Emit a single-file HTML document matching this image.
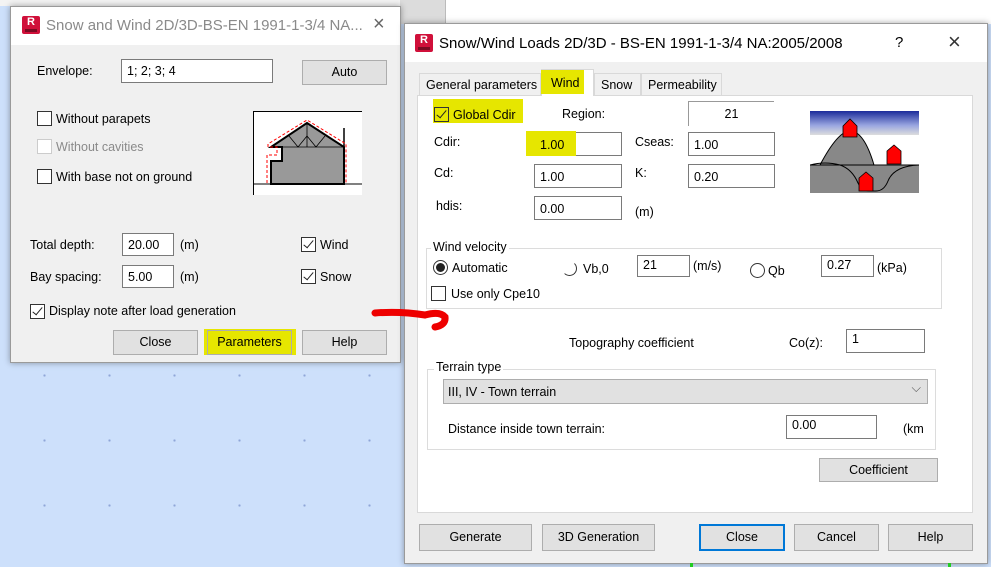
<!DOCTYPE html>
<html><head><meta charset="utf-8"><style>
*{box-sizing:border-box;margin:0;padding:0}
body{width:991px;height:567px;position:relative;overflow:hidden;font-family:"Liberation Sans",sans-serif;font-size:12.5px;color:#000;
background-color:#cde0fb;background-image:radial-gradient(circle,#8fa6d8 1px,transparent 1.3px);background-size:65px 65px;background-position:12px 18px}
.a{position:absolute;white-space:nowrap}
.dlg{position:absolute;background:#f0f0f0;border:1px solid #9a9a9a;box-shadow:0 0 6px rgba(0,0,0,.35)}
.tb{position:absolute;left:0;right:0;top:0;height:38px;background:#fff}
.inp{position:absolute;background:#fff;border:1px solid #7a7a7a;padding:4px 0 0 5px;height:24px}
.btn{position:absolute;background:#e1e1e1;border:1px solid #adadad;text-align:center;line-height:23px}
.cb{position:absolute;width:15px;height:15px;border:1px solid #333;background:#fff}
.cb.k::after{content:"";position:absolute;left:4px;top:0px;width:4px;height:9px;border:solid #222;border-width:0 1.5px 1.5px 0;transform:rotate(40deg)}
.hl{position:absolute;background:#e6e600}
.grp{position:absolute;border:1px solid #dcdcdc}
.lg{position:absolute;background:#fff;padding:0 2px}
.logo{position:absolute;width:18px;height:18px;background:#d0103a;border-radius:2px;color:#fff;font-weight:bold;font-size:11px;text-align:center;line-height:13px}
.logo::after{content:"";position:absolute;left:3px;bottom:2px;width:12px;height:3px;background:#7a0a22}
.rad{position:absolute;width:15px;height:15px;border-radius:50%;border:1px solid #333;background:#fff}
</style></head><body>
<div class="a" style="left:0;top:0;width:991px;height:6px;background:#f3f3f3"></div>
<div class="a" style="left:400px;top:0;width:46px;height:24px;background:#dcdcdc;border-right:1px solid #bbb"></div>
<div class="a" style="left:446px;top:0;width:545px;height:24px;background:#fff"></div>

<!-- Left dialog -->
<div class="dlg" style="left:10px;top:6px;width:391px;height:357px">
 <div class="tb"></div>
 <div class="logo" style="left:11px;top:9px">R</div>
 <div class="a" style="left:35px;top:10px;font-size:15px;color:#8a8a8a">Snow and Wind 2D/3D-BS-EN 1991-1-3/4 NA...</div>
 <div class="a" style="left:362px;top:6px;font-size:20px;color:#666">×</div>
 <div class="a" style="left:26px;top:57px">Envelope:</div>
 <div class="inp" style="left:110px;top:52px;width:152px;height:24px">1; 2; 3; 4</div>
 <div class="btn" style="left:291px;top:53px;width:85px;height:25px">Auto</div>
 <div class="cb" style="left:26px;top:104px"></div><div class="a" style="left:45px;top:105px">Without parapets</div>
 <div class="cb" style="left:26px;top:132px;border-color:#ccc"></div><div class="a" style="left:45px;top:133px;color:#8a8a8a">Without cavities</div>
 <div class="cb" style="left:26px;top:162px"></div><div class="a" style="left:45px;top:163px">With base not on ground</div>
 <svg class="a" style="left:242px;top:104px" width="109" height="84" viewBox="0 0 109 84">
  <rect width="109" height="84" fill="#fff"/><path d="M0 0.5H109M0.5 0V84M0 73H109" stroke="#000"/>
  <path d="M18 36H29V50H18V73H91V36L54 12Z" fill="#999" stroke="#000" stroke-width="2"/>
  <path d="M91 17V73" stroke="#000" stroke-width="1.5"/>
  <path d="M18 36H91M36 25L45 36L54 25L63 36L72 25M54 12V36" stroke="#000" fill="none" stroke-width="0.8"/>
  <path d="M14 72V44H24V36H15V33L54 9L93 33V72" stroke="red" fill="none" stroke-dasharray="3 2"/>
 </svg>
 <div class="a" style="left:19px;top:231px">Total depth:</div>
 <div class="inp" style="left:111px;top:226px;width:52px;height:23px">20.00</div><div class="a" style="left:169px;top:231px">(m)</div>
 <div class="cb k" style="left:290px;top:230px"></div><div class="a" style="left:309px;top:231px">Wind</div>
 <div class="a" style="left:19px;top:263px">Bay spacing:</div>
 <div class="inp" style="left:111px;top:258px;width:52px;height:23px">5.00</div><div class="a" style="left:169px;top:263px">(m)</div>
 <div class="cb k" style="left:290px;top:262px"></div><div class="a" style="left:309px;top:263px">Snow</div>
 <div class="cb k" style="left:19px;top:297px"></div><div class="a" style="left:38px;top:297px">Display note after load generation</div>
 <div class="btn" style="left:102px;top:323px;width:85px;height:25px">Close</div>
 <div class="hl" style="left:193px;top:322px;width:92px;height:26px"></div>
 <div class="btn" style="left:196px;top:323px;width:85px;height:25px;background:transparent">Parameters</div>
 <div class="btn" style="left:291px;top:323px;width:85px;height:25px">Help</div>
</div>

<!-- Right dialog -->
<div class="dlg" style="left:404px;top:23px;width:584px;height:541px">
 <div class="tb"></div>
 <div class="logo" style="left:10px;top:10px">R</div>
 <div class="a" style="left:34px;top:11px;font-size:15px">Snow/Wind Loads 2D/3D - BS-EN 1991-1-3/4 NA:2005/2008</div>
 <div class="a" style="left:490px;top:10px;font-size:15px">?</div>
 <div class="a" style="left:543px;top:5px;font-size:22px;color:#333">×</div>
 <div class="a" style="left:12px;top:71px;width:556px;height:418px;background:#fff;border:1px solid #d9d9d9"></div>
 <div class="a" style="left:14px;top:49px;width:122px;height:22px;border:1px solid #d9d9d9;border-bottom:none;padding:4px 0 0 6px">General parameters</div>
 <div class="a" style="left:136px;top:45px;width:53px;height:27px;border:1px solid #d9d9d9;border-bottom:none;background:#fff"></div>
 <div class="hl" style="left:136px;top:46px;width:43px;height:24px"></div>
 <div class="a" style="left:146px;top:52px">Wind</div>
 <div class="a" style="left:189px;top:49px;width:47px;height:22px;border:1px solid #d9d9d9;border-bottom:none;padding:4px 0 0 6px">Snow</div>
 <div class="a" style="left:236px;top:49px;width:81px;height:22px;border:1px solid #d9d9d9;border-bottom:none;padding:4px 0 0 6px">Permeability</div>

 <div class="hl" style="left:28px;top:75px;width:90px;height:24px"></div>
 <div class="cb k" style="left:29px;top:83px;background:transparent"></div><div class="a" style="left:48px;top:84px">Global Cdir</div>
 <div class="a" style="left:157px;top:83px">Region:</div>
 <div class="a" style="left:283px;top:77px;width:86px;height:25px;border-top:1px solid #999;border-left:1px solid #999;text-align:center;padding-top:5px">21</div>
 <div class="a" style="left:29px;top:111px">Cdir:</div>
 <div class="inp" style="left:129px;top:108px;width:88px"></div>
 <div class="hl" style="left:121px;top:107px;width:50px;height:25px"></div>
 <div class="a" style="left:135px;top:114px">1.00</div>
 <div class="a" style="left:230px;top:111px">Cseas:</div>
 <div class="inp" style="left:283px;top:108px;width:87px;padding-top:5px">1.00</div>
 <div class="a" style="left:29px;top:142px">Cd:</div>
 <div class="inp" style="left:129px;top:140px;width:88px;padding-top:5px">1.00</div>
 <div class="a" style="left:230px;top:142px">K:</div>
 <div class="inp" style="left:283px;top:140px;width:87px;padding-top:5px">0.20</div>
 <div class="a" style="left:31px;top:175px">hdis:</div>
 <div class="inp" style="left:129px;top:172px;width:88px;padding-top:5px">0.00</div>
 <div class="a" style="left:230px;top:181px">(m)</div>
 <svg class="a" style="left:405px;top:87px" width="109" height="82" viewBox="0 0 109 82">
  <defs><linearGradient id="s" x1="0" y1="0" x2="0" y2="1"><stop offset="0" stop-color="#1a2a9a"/><stop offset=".6" stop-color="#9aa6e0"/><stop offset="1" stop-color="#ddd"/></linearGradient></defs>
  <rect width="109" height="82" fill="#fff"/><rect width="109" height="24" fill="url(#s)"/>
  <path d="M10 54Q28 20 40 20Q54 20 64 54Z" fill="#888" stroke="#000"/>
  <path d="M0 54H109V82H0Z" fill="#888"/>
  <path d="M0 54Q15 50 30 54Q42 58 48 72Q52 80 60 80H66Q74 80 78 70Q84 55 109 54" fill="none" stroke="#000"/>
  <path d="M0 54H109" stroke="#000"/>
  <g fill="red" stroke="#000" stroke-width=".8"><path d="M33 15L40 8L47 15V26H33Z"/><path d="M77 40L84 34L91 40V53H77Z"/><path d="M49 67L56 61L63 67V80H49Z"/></g>
 </svg>

 <div class="grp" style="left:21px;top:224px;width:516px;height:61px"></div>
 <div class="lg" style="left:26px;top:216px">Wind velocity</div>
 <div class="rad" style="left:28px;top:236px"><div style="position:absolute;left:2px;top:2px;width:9px;height:9px;border-radius:50%;background:#222"></div></div>
 <div class="a" style="left:47px;top:237px">Automatic</div>
 <div class="rad" style="left:157px;top:237px;border-color:#fff #333 #333 #fff"></div><div class="a" style="left:178px;top:238px">Vb,0</div>
 <div class="inp" style="left:232px;top:231px;width:53px;height:22px;padding-top:2px">21</div><div class="a" style="left:288px;top:235px">(m/s)</div>
 <div class="rad" style="left:345px;top:239px"></div><div class="a" style="left:363px;top:240px">Qb</div>
 <div class="inp" style="left:416px;top:231px;width:53px;height:22px;padding-top:2px">0.27</div><div class="a" style="left:472px;top:237px">(kPa)</div>
 <div class="cb" style="left:26px;top:262px"></div><div class="a" style="left:46px;top:263px">Use only Cpe10</div>

 <div class="a" style="left:164px;top:312px">Topography coefficient</div>
 <div class="a" style="left:384px;top:312px">Co(z):</div>
 <div class="inp" style="left:441px;top:305px;width:79px;height:24px;padding-top:2px">1</div>

 <div class="grp" style="left:22px;top:345px;width:509px;height:81px"></div>
 <div class="lg" style="left:29px;top:336px">Terrain type</div>
 <div class="a" style="left:38px;top:355px;width:485px;height:25px;background:#e1e1e1;border:1px solid #adadad;padding:5px 0 0 4px">III, IV - Town terrain<span style="position:absolute;right:6px;top:1px;color:#555">⌵</span></div>
 <div class="a" style="left:43px;top:398px">Distance inside town terrain:</div>
 <div class="inp" style="left:381px;top:391px;width:91px;height:24px;padding-top:2px">0.00</div>
 <div class="a" style="left:498px;top:398px">(km</div>
 <div class="btn" style="left:414px;top:434px;width:119px;height:24px">Coefficient</div>

 <div class="btn" style="left:14px;top:500px;width:113px;height:27px;line-height:25px">Generate</div>
 <div class="btn" style="left:137px;top:500px;width:113px;height:27px;line-height:25px">3D Generation</div>
 <div class="btn" style="left:294px;top:500px;width:86px;height:27px;line-height:23px;border:2px solid #0078d7">Close</div>
 <div class="btn" style="left:389px;top:500px;width:85px;height:27px;line-height:25px">Cancel</div>
 <div class="btn" style="left:483px;top:500px;width:85px;height:27px;line-height:25px">Help</div>
</div>
<div class="a" style="left:690px;top:563px;width:3px;height:4px;background:#2c2"></div>
<div class="a" style="left:948px;top:563px;width:3px;height:4px;background:#2c2"></div>

<svg class="a" style="left:370px;top:305px" width="85" height="30" viewBox="0 0 85 30">
 <path d="M5 8Q30 6 55 10Q70 6 75 12Q76 20 65 22" stroke="#ee0000" stroke-width="7" fill="none" stroke-linecap="round"/>
</svg>
</body></html>
